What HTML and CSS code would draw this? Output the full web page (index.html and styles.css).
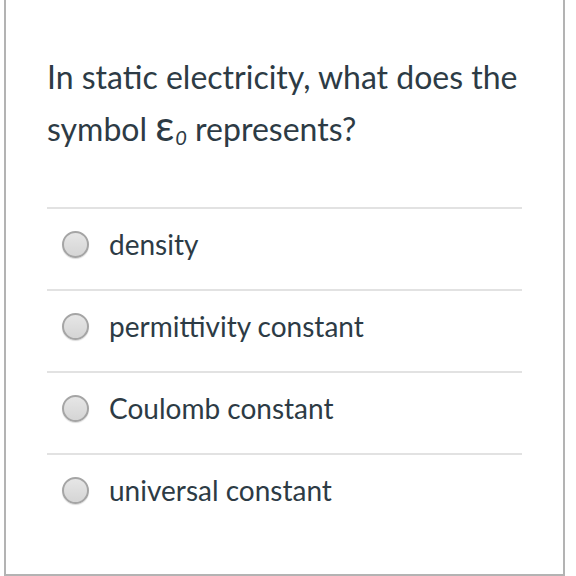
FILE: index.html
```html
<!DOCTYPE html>
<html>
<head>
<meta charset="utf-8">
<link rel="stylesheet" href="styles.css">
</head>
<body>
<div class="card">
  <p class="question">In static electricity, what does the symbol <span class="sym"><span class="eps">ε</span><sub>0</sub></span> represents?</p>
  <div class="answers">
    <label class="answer"><span class="radio"></span><span class="label">density</span></label>
    <label class="answer"><span class="radio"></span><span class="label">permittivity constant</span></label>
    <label class="answer"><span class="radio"></span><span class="label">Coulomb constant</span></label>
    <label class="answer"><span class="radio"></span><span class="label">universal constant</span></label>
  </div>
</div>
</body>
</html>
```
FILE: styles.css
```css
html, body {
  margin: 0;
  padding: 0;
  background: #fff;
}
body {
  font-family: Lato, "Liberation Sans", sans-serif;
  color: #2d3b45;
}
.card {
  box-sizing: border-box;
  margin-left: 4px;
  width: 561px;
  height: 576px;
  border: 2px solid #b3b3b3;
  border-top: none;
  padding: 51px 41px 0 41px;
}
.question {
  margin: 0 0 52px 0;
  font-size: 32px;
  line-height: 52px;
}
.sym {
  line-height: 0;
}
.eps {
  font-size: 42px;
  line-height: 0;
}
.sym sub {
  font-size: 20px;
  font-style: italic;
  vertical-align: baseline;
  position: relative;
  top: 4px;
  line-height: 0;
  margin-left: 1px;
}
.answers {
  display: flex;
  flex-direction: column;
}
.answer {
  box-sizing: border-box;
  display: flex;
  align-items: center;
  height: 82px;
  border-top: 2px solid #e2e2e2;
  padding: 0 0 10px 15px;
}
.radio {
  box-sizing: border-box;
  width: 27px;
  height: 27px;
  border-radius: 50%;
  border: 2px solid #a5a5a5;
  background: linear-gradient(#e6e6e6, #d5d5d5);
  box-shadow: 0 1px 1px rgba(0,0,0,0.15);
  margin-right: 20px;
  flex: none;
}
.label {
  font-size: 28px;
}
```
